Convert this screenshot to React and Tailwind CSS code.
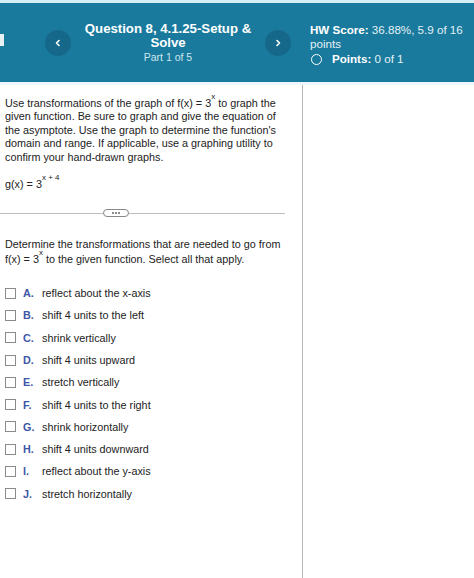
import React from "react";

const options = [
  ["A.", "reflect about the x-axis"],
  ["B.", "shift 4 units to the left"],
  ["C.", "shrink vertically"],
  ["D.", "shift 4 units upward"],
  ["E.", "stretch vertically"],
  ["F.", "shift 4 units to the right"],
  ["G.", "shrink horizontally"],
  ["H.", "shift 4 units downward"],
  ["I.", "reflect about the y-axis"],
  ["J.", "stretch horizontally"],
];

function Chevron({ dir }) {
  return (
    <svg width="8" height="8" viewBox="0 0 8 8" fill="none" stroke="white" strokeWidth="1.6" strokeLinecap="round" strokeLinejoin="round">
      {dir === "left" ? <path d="M5 1.5 2.5 4 5 6.5" /> : <path d="M3 1.5 5.5 4 3 6.5" />}
    </svg>
  );
}

export default function App() {
  return (
    <div className="w-[474px] h-[578px] bg-white overflow-hidden flex flex-col font-['Liberation_Sans',Arial,sans-serif] text-[#222]">
      <div className="h-[3px] bg-[#d6eef5]" />
      <header className="h-[79px] bg-[#1a7a9d] flex items-center text-white">
        <div className="w-[4px] h-[12px] bg-white/90 mt-[-6px]" />
        <button className="ml-[41px] w-[26px] h-[26px] rounded-full bg-[#15688a] flex items-center justify-center">
          <Chevron dir="left" />
        </button>
        <div className="w-[194px] flex flex-col items-center mt-[2px]">
          <div className="text-[13.2px] font-bold leading-[14px] text-center whitespace-nowrap">Question 8, 4.1.25-Setup &amp;</div>
          <div className="text-[13.2px] font-bold leading-[14px]">Solve</div>
          <div className="text-[10.5px] leading-[15px] text-[#cde6ef]">Part 1 of 5</div>
        </div>
        <button className="w-[26px] h-[26px] rounded-full bg-[#15688a] flex items-center justify-center">
          <Chevron dir="right" />
        </button>
        <div className="ml-[19px] flex flex-col text-[11.6px] leading-[14.5px] mt-[4px]">
          <div className="whitespace-nowrap">
            <span className="font-bold">HW Score:</span> <span className="text-[#e3f1f6]">36.88%, 5.9 of 16</span>
          </div>
          <div className="text-[#e3f1f6]">points</div>
          <div className="flex items-center">
            <span className="w-[11px] h-[11px] rounded-full border-[1.6px] border-white ml-[1px] mr-[10px]" />
            <span className="font-bold">Points:</span>&nbsp;<span className="text-[#e3f1f6]">0 of 1</span>
          </div>
        </div>
      </header>
      <div className="h-[3px] bg-[#eef8fb]" />
      <div className="flex flex-1">
        <div className="w-[303px] border-r-[1.5px] border-[#b5b5b5] pt-[12px]">
          <p className="pl-[5px] pr-[16px] text-[10.8px] leading-[13.4px]">
            Use transformations of the graph of f(x) = 3<sup className="text-[8px] align-[4px]">x</sup> to graph the given function. Be sure to graph and give the equation of the asymptote. Use the graph to determine the function's domain and range. If applicable, use a graphing utility to confirm your hand-drawn graphs.
          </p>
          <p className="px-[5px] mt-[14px] text-[10.8px] leading-[13px]">
            g(x) = 3<sup className="text-[8px] align-[4px]">x + 4</sup>
          </p>
          <div className="mt-[18px] flex items-center pr-[17px]">
            <div className="flex-1 h-px bg-[#bdbdbd]" />
            <div className="w-[26px] h-[8px] rounded-full border border-[#888] flex items-center justify-center gap-[1.5px]">
              <span className="w-[1.5px] h-[1.5px] bg-[#666] rounded-full" />
              <span className="w-[1.5px] h-[1.5px] bg-[#666] rounded-full" />
              <span className="w-[1.5px] h-[1.5px] bg-[#666] rounded-full" />
            </div>
            <div className="w-[156px] h-px bg-[#bdbdbd]" />
          </div>
          <p className="pl-[5px] pr-[16px] mt-[20px] text-[10.8px] leading-[15px]">
            Determine the transformations that are needed to go from f(x) = 3<sup className="text-[8px] align-[4px]">x</sup> to the given function. Select all that apply.
          </p>
          <ul className="mt-[15px] px-[5px] flex flex-col">
            {options.map(([letter, text]) => (
              <li key={letter} className="h-[22.3px] flex items-center text-[10.8px]">
                <span className="w-[11px] h-[11px] border border-[#8a8a8a] bg-white shrink-0" />
                <span className="ml-[7px] w-[19px] text-[#3d56a6] font-bold">{letter}</span>
                <span>{text}</span>
              </li>
            ))}
          </ul>
        </div>
        <div className="flex-1" />
      </div>
    </div>
  );
}
